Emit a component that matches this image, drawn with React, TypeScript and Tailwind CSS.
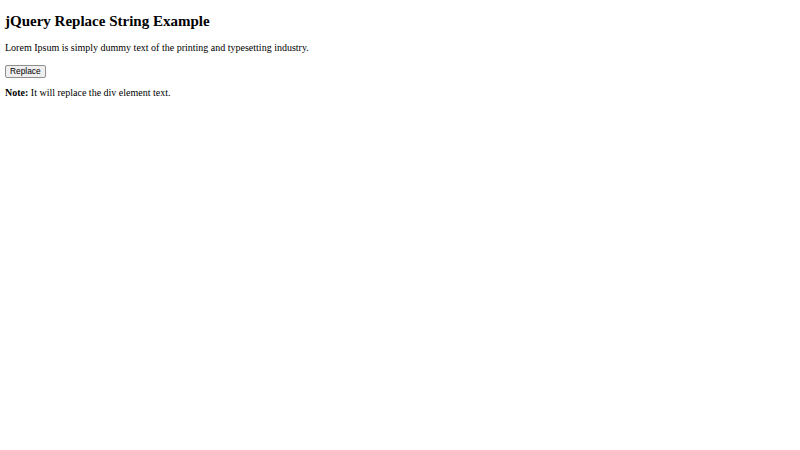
export default function App() {
  return (
    <div className="min-h-screen bg-white px-[5px] pt-[0.1px] text-black font-['Liberation_Serif',serif]">
      <h2 className="mt-[12.45px] mb-[12.45px] text-[15px] font-bold leading-[17.25px]">
        jQuery Replace String Example
      </h2>
      <div className="my-[10px] text-[10px] leading-[11.5px]">
        Lorem Ipsum is simply dummy text of the printing and typesetting industry.
      </div>
      <button className="mt-[11px] block h-[13px] rounded-[2px] border border-[#8f8f8f] bg-[#efefef] px-[4px] text-[8.33px] leading-[9px] font-['Liberation_Sans',Arial,sans-serif]">
        Replace
      </button>
      <p className="mt-[9px] mb-[10px] text-[10px] leading-[11.5px]">
        <b>Note:</b> It will replace the div element text.
      </p>
    </div>
  );
}
